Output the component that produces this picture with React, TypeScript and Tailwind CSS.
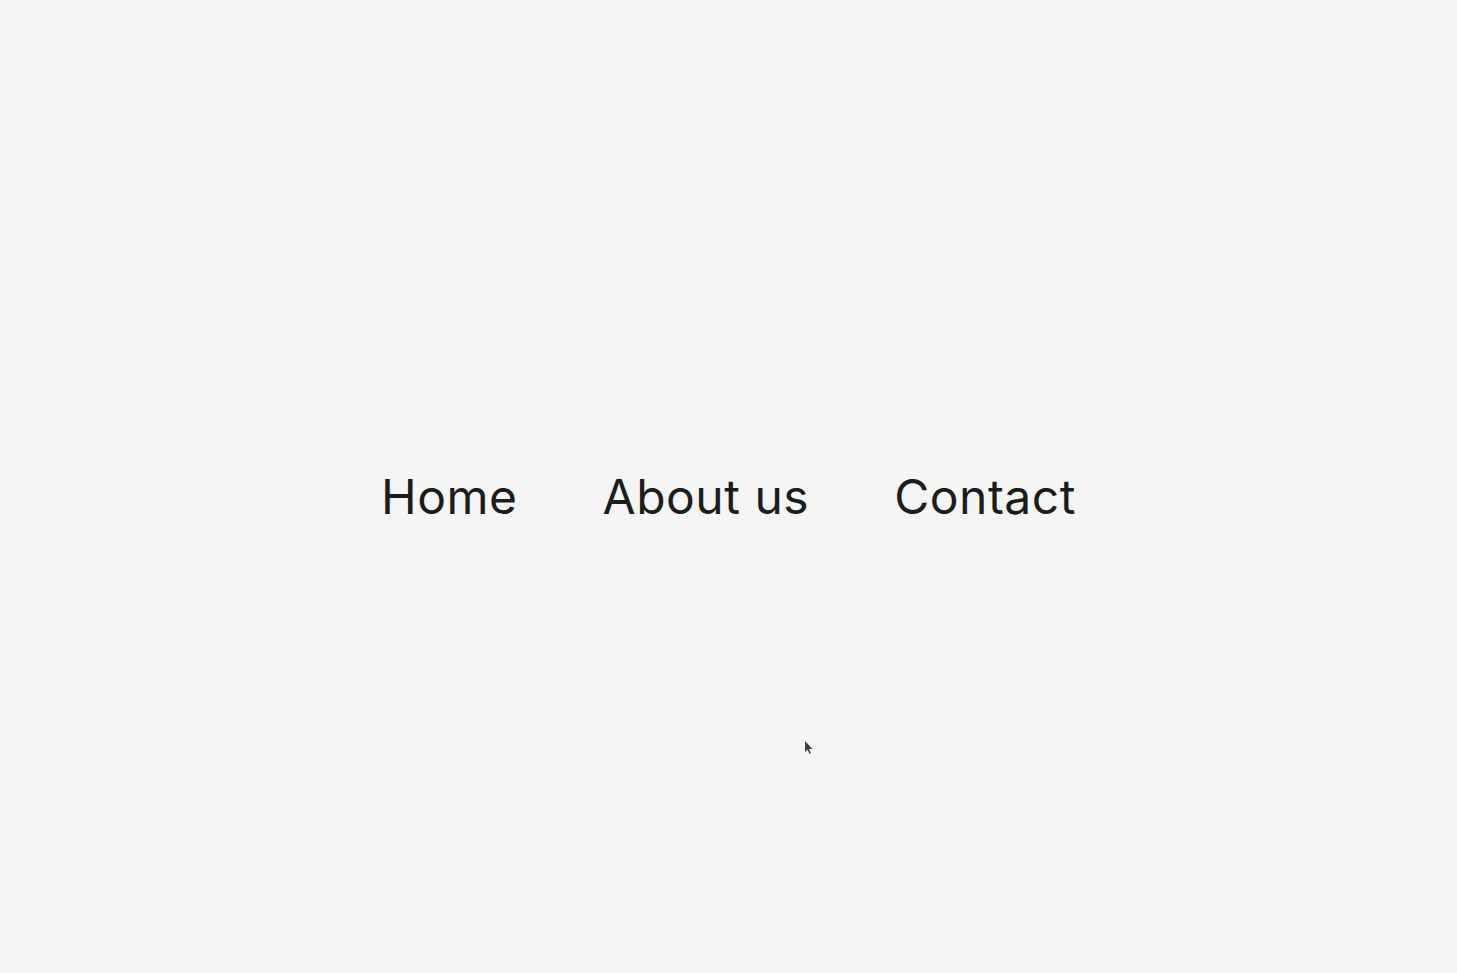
export default function App() {
  const links = ["Home", "About us", "Contact"];

  return (
    <div className="relative flex h-screen w-full items-center justify-center bg-[#f5f5f5]">
      <nav className="flex gap-[85px] pt-[21px] font-['Inter',sans-serif] text-[48px] leading-none text-[#1c1c1c]">
        {links.map((l) => (
          <a key={l} href="#" className="tracking-[0.5px]">
            {l}
          </a>
        ))}
      </nav>

      {/* mouse pointer */}
      <svg
        className="absolute left-[804px] top-[740px] h-[16px] w-[10px] opacity-80"
        viewBox="0 0 10 16"
      >
        <path d="M1 1 L1 12 L3.5 9.5 L5.5 14 L7 13.3 L5 9 L8.5 9 Z" fill="#111" />
      </svg>
    </div>
  );
}
